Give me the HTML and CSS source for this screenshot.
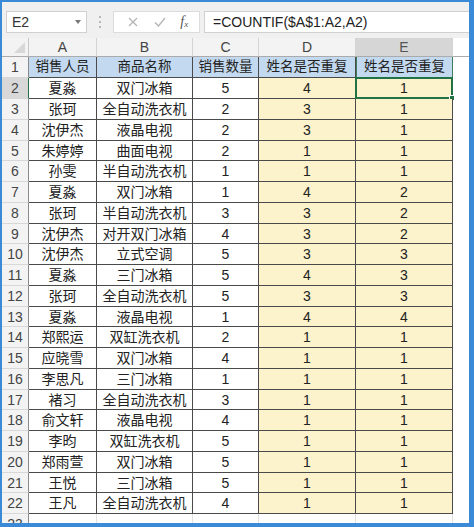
FILE: index.html
```html
<!DOCTYPE html>
<html lang="zh">
<head>
<meta charset="utf-8">
<link rel="stylesheet" href="styles.css">
</head>
<body>
<div class="frame">
  <div class="fbar">
    <div class="namebox"><span>E2</span><span class="caret"></span></div>
    <div class="dots"><i></i><i></i><i></i></div>
    <div class="icons">
      <svg width="12" height="12" viewBox="0 0 12 12"><path d="M2 2L10 10M10 2L2 10" stroke="#b4b4b4" stroke-width="1.3" fill="none"/></svg>
      <svg width="14" height="12" viewBox="0 0 14 12"><path d="M2 6.5L5.5 10L12 2" stroke="#b4b4b4" stroke-width="1.3" fill="none"/></svg>
      <span class="fx">f<sub>x</sub></span>
    </div>
    <div class="formula">=COUNTIF($A$1:A2,A2)</div>
  </div>
  <div class="sheet">
    <div class="row colhead">
      <div class="corner"><span class="tri"></span></div>
      <div class="ch">A</div><div class="ch">B</div><div class="ch">C</div><div class="ch">D</div><div class="ch sel">E</div><div class="ch rest"></div>
    </div>
    <div class="row">
      <div class="rh">1</div>
      <div class="c b">销售人员</div><div class="c b">商品名称</div><div class="c b">销售数量</div><div class="c b">姓名是否重复</div><div class="c b e1">姓名是否重复</div><div class="rest"></div>
    </div>
    <div class="row">
      <div class="rh rsel">2</div>
      <div class="c">夏淼</div><div class="c">双门冰箱</div><div class="c">5</div><div class="c y">4</div><div class="c y active">1<span class="handle"></span></div><div class="rest"></div>
    </div>
    <div class="row"><div class="rh">3</div><div class="c">张珂</div><div class="c">全自动洗衣机</div><div class="c">2</div><div class="c y">3</div><div class="c y">1</div><div class="rest"></div></div>
    <div class="row"><div class="rh">4</div><div class="c">沈伊杰</div><div class="c">液晶电视</div><div class="c">2</div><div class="c y">3</div><div class="c y">1</div><div class="rest"></div></div>
    <div class="row short"><div class="rh">5</div><div class="c">朱婷婷</div><div class="c">曲面电视</div><div class="c">2</div><div class="c y">1</div><div class="c y">1</div><div class="rest"></div></div>
    <div class="row"><div class="rh">6</div><div class="c">孙雯</div><div class="c">半自动洗衣机</div><div class="c">1</div><div class="c y">1</div><div class="c y">1</div><div class="rest"></div></div>
    <div class="row"><div class="rh">7</div><div class="c">夏淼</div><div class="c">双门冰箱</div><div class="c">1</div><div class="c y">4</div><div class="c y">2</div><div class="rest"></div></div>
    <div class="row"><div class="rh">8</div><div class="c">张珂</div><div class="c">半自动洗衣机</div><div class="c">3</div><div class="c y">3</div><div class="c y">2</div><div class="rest"></div></div>
    <div class="row short"><div class="rh">9</div><div class="c">沈伊杰</div><div class="c">对开双门冰箱</div><div class="c">4</div><div class="c y">3</div><div class="c y">2</div><div class="rest"></div></div>
    <div class="row"><div class="rh">10</div><div class="c">沈伊杰</div><div class="c">立式空调</div><div class="c">5</div><div class="c y">3</div><div class="c y">3</div><div class="rest"></div></div>
    <div class="row"><div class="rh">11</div><div class="c">夏淼</div><div class="c">三门冰箱</div><div class="c">5</div><div class="c y">4</div><div class="c y">3</div><div class="rest"></div></div>
    <div class="row"><div class="rh">12</div><div class="c">张珂</div><div class="c">全自动洗衣机</div><div class="c">5</div><div class="c y">3</div><div class="c y">3</div><div class="rest"></div></div>
    <div class="row short"><div class="rh">13</div><div class="c">夏淼</div><div class="c">液晶电视</div><div class="c">1</div><div class="c y">4</div><div class="c y">4</div><div class="rest"></div></div>
    <div class="row"><div class="rh">14</div><div class="c">郑熙运</div><div class="c">双缸洗衣机</div><div class="c">2</div><div class="c y">1</div><div class="c y">1</div><div class="rest"></div></div>
    <div class="row"><div class="rh">15</div><div class="c">应晓雪</div><div class="c">双门冰箱</div><div class="c">4</div><div class="c y">1</div><div class="c y">1</div><div class="rest"></div></div>
    <div class="row"><div class="rh">16</div><div class="c">李思凡</div><div class="c">三门冰箱</div><div class="c">1</div><div class="c y">1</div><div class="c y">1</div><div class="rest"></div></div>
    <div class="row short"><div class="rh">17</div><div class="c">褚习</div><div class="c">全自动洗衣机</div><div class="c">3</div><div class="c y">1</div><div class="c y">1</div><div class="rest"></div></div>
    <div class="row"><div class="rh">18</div><div class="c">俞文轩</div><div class="c">液晶电视</div><div class="c">4</div><div class="c y">1</div><div class="c y">1</div><div class="rest"></div></div>
    <div class="row"><div class="rh">19</div><div class="c">李昀</div><div class="c">双缸洗衣机</div><div class="c">5</div><div class="c y">1</div><div class="c y">1</div><div class="rest"></div></div>
    <div class="row"><div class="rh">20</div><div class="c">郑雨萱</div><div class="c">双门冰箱</div><div class="c">5</div><div class="c y">1</div><div class="c y">1</div><div class="rest"></div></div>
    <div class="row short"><div class="rh">21</div><div class="c">王悦</div><div class="c">三门冰箱</div><div class="c">5</div><div class="c y">1</div><div class="c y">1</div><div class="rest"></div></div>
    <div class="row"><div class="rh">22</div><div class="c">王凡</div><div class="c">全自动洗衣机</div><div class="c">4</div><div class="c y">1</div><div class="c y">1</div><div class="rest"></div></div>
    <div class="row last"><div class="rh">23</div><div class="e"></div><div class="e"></div><div class="e"></div><div class="e"></div><div class="e"></div><div class="rest"></div></div>
  </div>
</div>
</body>
</html>
```
FILE: styles.css
```css
* { box-sizing: border-box; }
body {
  margin: 0;
  font-family: "Liberation Sans", "Noto Sans CJK SC", sans-serif;
  color: #222;
}
.frame {
  width: 474px;
  height: 527px;
  border-style: solid;
  border-color: #3b8ad8;
  border-width: 2px 5px 4px 2px;
  background: #fff;
  overflow: hidden;
  display: flex;
  flex-direction: column;
}
.fbar {
  height: 36px;
  flex: none;
  background: #f0f0f0;
  display: flex;
  align-items: flex-start;
  padding: 9px 0 0 4px;
}
.namebox {
  width: 81px;
  height: 22px;
  background: #fff;
  border: 1px solid #d0d0d0;
  display: flex;
  align-items: center;
  justify-content: space-between;
  padding: 0 5px 0 5px;
  font-size: 14px;
  color: #333;
}
.caret {
  width: 0; height: 0;
  border-left: 3px solid transparent;
  border-right: 3px solid transparent;
  border-top: 4px solid #777;
}
.dots {
  width: 26px;
  height: 22px;
  display: flex;
  flex-direction: column;
  align-items: center;
  justify-content: center;
  gap: 3px;
}
.dots i { width: 2px; height: 2px; background: #b8b8b8; display: block; }
.icons {
  width: 87px;
  height: 22px;
  background: #fff;
  border: 1px solid #dcdcdc;
  display: flex;
  align-items: center;
  justify-content: space-around;
  padding: 0 4px 0 6px;
}
.fx {
  font-family: "Liberation Serif", serif;
  font-style: italic;
  font-size: 14px;
  color: #555;
  line-height: 1;
}
.fx sub { font-size: 9px; vertical-align: -1px; }
.formula {
  flex: 1;
  margin-left: 4px;
  height: 22px;
  background: #fff;
  border: 1px solid #d0d0d0;
  border-right: none;
  padding-left: 8px;
  display: flex;
  align-items: center;
  font-size: 14px;
  color: #222;
}
.sheet {
  flex: 1;
  min-height: 0;
  display: flex;
  flex-direction: column;
  background: #fff;
}
.row {
  display: grid;
  grid-template-columns: 27px 68px 96px 66px 97px 97px 1fr;
  grid-template-rows: minmax(0, 1fr);
  height: 21px;
  flex: none;
  background: #fff;
}
.row > div { min-height: 0; line-height: 16px; }
.row.short { height: 20px; }
.row.colhead { height: 19px; background: #f3f3f3; }
.corner {
  position: relative;
  border-right: 1px solid #c8c8c8;
  border-bottom: 1px solid #ababab;
}
.tri {
  position: absolute;
  right: 3px; bottom: 3px;
  width: 0; height: 0;
  border-left: 11px solid transparent;
  border-bottom: 11px solid #d8d8d8;
}
.ch {
  border-right: 1px solid #d4d4d4;
  border-bottom: 1px solid #ababab;
  display: flex;
  align-items: center;
  justify-content: center;
  font-size: 14px;
  color: #444;
}
.ch.sel { background: #d6d6d6; color: #555; }
.ch.rest { border-right: none; }
.rh {
  background: #f3f3f3;
  border-right: 1px solid #8a8a8a;
  border-bottom: 1px solid #d8d8d8;
  display: flex;
  align-items: center;
  justify-content: center;
  font-size: 14px;
  color: #444;
}
.last .rh { align-items: flex-start; padding-top: 2px; }
.rh.rsel { background: #d8d8d8; border-right-color: #217346; }
.c {
  position: relative;
  border-right: 1px solid #4a4a4a;
  border-bottom: 1px solid #4a4a4a;
  display: flex;
  align-items: center;
  justify-content: center;
  font-size: 14px;
  color: #222;
  background: #fff;
}
.c.b { background: #c3d9ef; font-size: 13.5px; }
.c.e1 { border-left: 1px solid #3e7d5c; border-right-color: #3e7d5c; }
.c.y { background: #fcf2cb; }
.c.active { border: 2px solid #217346; margin: -1px 0 0 -1px; }
.handle {
  position: absolute;
  right: -4px; bottom: -4px;
  width: 6px; height: 6px;
  background: #217346;
  border: 1px solid #fff;
}
.e { border-right: 1px solid #e0e0e0; }
.rest { background: #fff; }
```
